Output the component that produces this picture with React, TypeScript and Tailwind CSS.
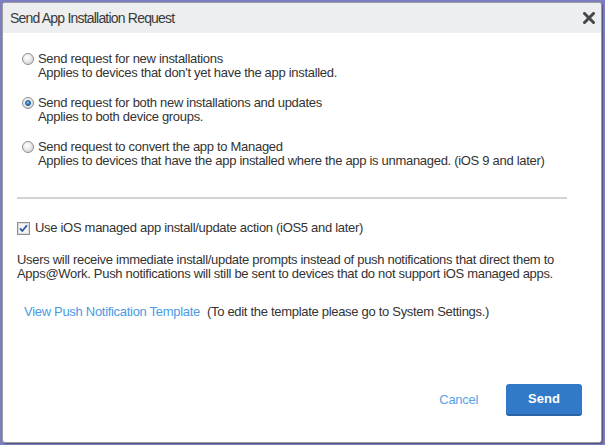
import React, { useState } from "react";

const FONT = "font-['Liberation_Sans',Arial,sans-serif]";

// old-school gray radio, blue dot when picked
const Radio = ({ checked }: { checked: boolean }) => (
  <span className="relative mt-[1px] flex h-[12px] w-[12px] shrink-0 items-center justify-center rounded-full border border-[#8f8f8f] bg-[radial-gradient(circle_at_40%_35%,#ffffff_0%,#eaeaea_45%,#c9c9c9_100%)]">
    {checked && (
      <span className="h-[6px] w-[6px] rounded-full border border-[#1d4f8a] bg-[radial-gradient(circle_at_40%_35%,#8fc4f2_0%,#2f7fd0_60%,#1b5ea8_100%)]" />
    )}
  </span>
);

const CheckBox = () => (
  <svg width="13" height="13" viewBox="0 0 13 13" className="shrink-0">
    <rect x="0.5" y="0.5" width="12" height="12" fill="#f4f4f4" stroke="#8e8f8f" />
    <rect x="1.5" y="1.5" width="10" height="10" fill="none" stroke="#dcdcdc" />
    <path d="M3 6.3L5.3 9L10 3.2" stroke="#2f56a8" strokeWidth="1.8" fill="none" strokeLinejoin="round" />
  </svg>
);

const OPTIONS = [
  {
    title: "Send request for new installations",
    sub: "Applies to devices that don't yet have the app installed.",
  },
  {
    title: "Send request for both new installations and updates",
    sub: "Applies to both device groups.",
  },
  {
    title: "Send request to convert the app to Managed",
    sub: "Applies to devices that have the app installed where the app is unmanaged. (iOS 9 and later)",
  },
];

export default function App() {
  const [picked, setPicked] = useState(1);

  return (
    <div className={`w-[605px] h-[445px] bg-[#7b7fc2] pt-[2px] pl-[2px] pr-[3px] pb-[2px] ${FONT}`}>
      <div className="flex h-full flex-col overflow-hidden rounded-[3px] border border-[#9c9c9c] bg-white shadow-[1px_1px_1px_rgba(0,0,0,0.35)]">
        {/* Header */}
        <div className="flex h-[30px] shrink-0 items-center justify-between bg-[#eceef0] pl-[7px] pr-[5px]">
          <h2 className="text-[14px] tracking-[-0.8px] text-[#3a3a3a]">Send App Installation Request</h2>
          <button className="flex h-[14px] w-[14px] items-center justify-center">
            <svg width="12" height="12" viewBox="0 0 12 12">
              <path d="M1.5 1.5L10.5 10.5M10.5 1.5L1.5 10.5" stroke="#474747" strokeWidth="3" strokeLinecap="square" />
            </svg>
          </button>
        </div>

        {/* Body */}
        <div className="flex flex-1 flex-col px-[14px] pt-[19px] text-[13px] leading-[14px] tracking-[-0.3px] text-[#333333]">
          <div className="flex flex-col gap-[16px] pl-[5px]">
            {OPTIONS.map((o, i) => (
              <label key={i} className="flex cursor-pointer items-start gap-[4px]" onClick={() => setPicked(i)}>
                <Radio checked={picked === i} />
                <span>
                  <span className="block">{o.title}</span>
                  <span className="block">{o.sub}</span>
                </span>
              </label>
            ))}
          </div>

          <div className="mt-[29px] mr-[20px] h-[2px] bg-[#d2d2d2]" />

          <label className="mt-[22px] flex items-center gap-[5px]">
            <CheckBox />
            <span>Use iOS managed app install/update action (iOS5 and later)</span>
          </label>

          <p className="mt-[18px] pr-[4px]">
            Users will receive immediate install/update prompts instead of push notifications that direct them to
            Apps@Work. Push notifications will still be sent to devices that do not support iOS managed apps.
          </p>

          <div className="mt-[24px] flex items-center gap-[7px] pl-[7px]">
            <a className="text-[#4a9be3]">View Push Notification Template</a>
            <span>(To edit the template please go to System Settings.)</span>
          </div>
        </div>

        {/* Footer */}
        <div className="flex shrink-0 items-center justify-end gap-[28px] pb-[26px] pr-[19px]">
          <button className="text-[13px] tracking-[-0.3px] text-[#5aa3e6]">Cancel</button>
          <button className="h-[32px] w-[76px] rounded-[3px] border-b-2 border-[#2a63a5] bg-[#3279c7] text-[13px] font-bold text-white">
            Send
          </button>
        </div>
      </div>
    </div>
  );
}
